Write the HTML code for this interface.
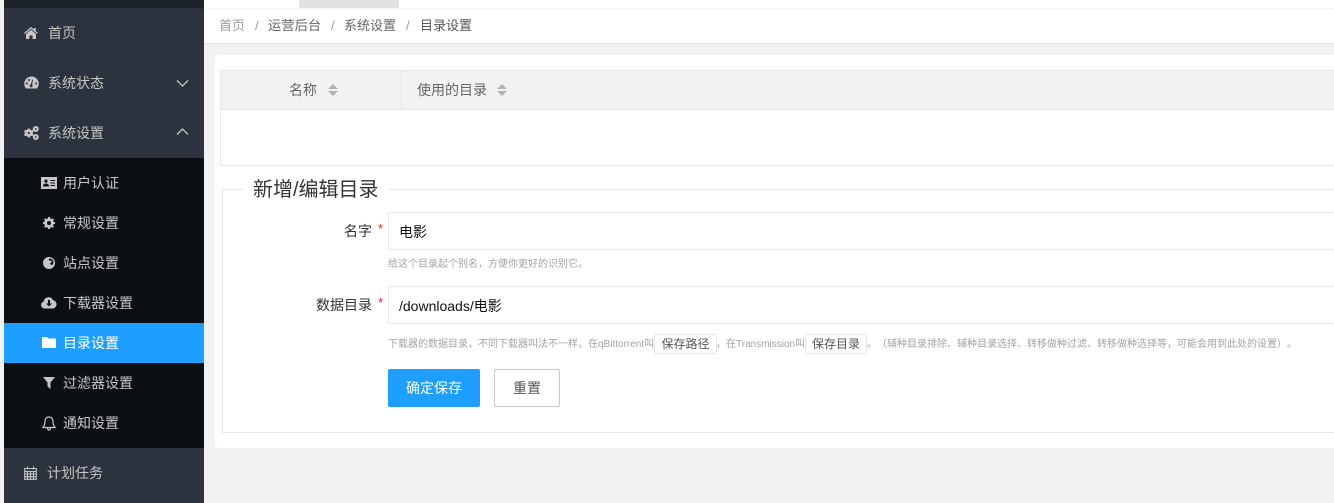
<!DOCTYPE html>
<html lang="zh"><head><meta charset="utf-8"><title>目录设置</title>
<style>
*{box-sizing:border-box}
html,body{margin:0;padding:0}
body{width:1334px;height:503px;overflow:hidden;background:#f2f2f2;position:relative;font-family:"Liberation Sans","Noto Sans CJK SC",sans-serif;font-size:14px;color:#333}
.a{position:absolute;white-space:nowrap}
#side{position:absolute;left:4px;top:0;width:200px;height:503px;background:#2b333e}
.ti{position:absolute;white-space:nowrap;color:#c6c6c6;font-size:14px;line-height:20px}
svg.i{position:absolute;fill:#c6c6c6}
svg.l{position:absolute;fill:none;stroke:#c6c6c6;stroke-width:1.3}
.g{color:#9a9a9a}
.tip{position:absolute;white-space:nowrap;font-size:10px;line-height:14px;color:#a3a3a3;text-spacing-trim:space-all;font-feature-settings:"palt" 0}
.code{position:absolute;height:20px;border:1px solid #e6e6e6;border-radius:2px;background:#fff;color:#555;font-size:12px;line-height:18px;text-align:center;white-space:nowrap}
.lab{position:absolute;right:962px;white-space:nowrap;font-size:14px;line-height:20px;color:#333}
.star{position:absolute;left:378px;color:#ff2020;font-size:13px;line-height:20px}
.inp{position:absolute;left:388px;width:960px;height:38px;border:1px solid #e6e6e6;border-radius:2px;background:#fff;color:#111;font-size:14px;line-height:38px;padding-left:10px;white-space:nowrap}
</style></head><body>

<div id="side">
<div style="position:absolute;left:0;top:0;width:200px;height:8px;background:#1c232b"></div>
<div style="position:absolute;left:0;top:158px;width:200px;height:290px;background:#0c0f14"></div>
<div style="position:absolute;left:0;top:323px;width:200px;height:40px;background:#1e9fff"></div>
</div>

<svg class="i" style="left:24px;top:27px" width="14" height="12" viewBox="0 0 14 12"><path d="M7 0 9.800 2.400V1h2v3.100L14 6l-.8.900L7 1.700.8 6.900 0 6z"/><path d="M7 2.800 12 7v5H8.500V8.500h-3V12H2V7z"/></svg>
<div class="ti" style="left:48px;top:23px">首页</div>

<svg class="i" style="left:24px;top:76px" width="15" height="13" viewBox="0 0 15 13"><path fill-rule="evenodd" d="M7.500 0.500A7.200 7.200 0 0 0 .3 7.700c0 1.800.6 3.500 1.700 4.800h11c1.100-1.300 1.700-3 1.700-4.800A7.200 7.200 0 0 0 7.500.500zM3 6.500a1 1 0 1 1 0 2 1 1 0 0 1 0-2zM5 3a1 1 0 1 1 0 2 1 1 0 0 1 0-2zM12 6.500a1 1 0 1 1 0 2 1 1 0 0 1 0-2zM8.300 3.500l.7.200-.9 5a1.500 1.500 0 1 1-1.300-.3z"/></svg>
<div class="ti" style="left:48px;top:73px">系统状态</div>
<svg class="l" style="left:176px;top:79px" width="13" height="8" viewBox="0 0 13 8"><path d="M1 1.500l5.500 5.500 5.500-5.500"/></svg>

<svg class="i" style="left:24px;top:126px" width="15" height="14" viewBox="0 0 15 14"><path fill-rule="evenodd" d="M3.800 2.500h2l.3 1.300 1.100.5 1.200-.6 1.300 1.500-.8 1.100v1.400l.8 1.100-1.300 1.500-1.200-.6-1.100.5-.3 1.300h-2l-.3-1.300-1.100-.5-1.200.6L0 8.800l.8-1.100V6.300L0 5.200l1.200-1.500 1.200.6 1.100-.5zM4.800 5.900a1.100 1.100 0 1 0 0 2.200 1.100 1.100 0 0 0 0-2.200z"/><path fill-rule="evenodd" d="M11.800 0a3 3 0 1 1 0 6 3 3 0 0 1 0-6zm0 2.100a.9.900 0 1 0 0 1.800.9.900 0 0 0 0-1.800zM11.800 8a3 3 0 1 1 0 6 3 3 0 0 1 0-6zm0 2.100a.9.900 0 1 0 0 1.800.9.900 0 0 0 0-1.800z"/></svg>
<div class="ti" style="left:48px;top:123px">系统设置</div>
<svg class="l" style="left:176px;top:128px" width="13" height="8" viewBox="0 0 13 8"><path d="M1 6.500l5.500-5.500 5.500 5.500"/></svg>

<svg class="i" style="left:41px;top:177px" width="16" height="12" viewBox="0 0 16 12"><path fill-rule="evenodd" d="M0 0h16v12H0zM5 2.500a1.600 1.600 0 1 0 0 3.200 1.600 1.600 0 0 0 0-3.200zM2 9.500h6c0-2-1-3-3-3s-3 1-3 3zM9.500 3v1H14V3zm0 2.500v1H14v-1zm0 2.500v1H14V8z"/></svg>
<div class="ti" style="left:63px;top:173px">用户认证</div>

<svg class="i" style="left:43px;top:217px" width="12" height="12" viewBox="0 0 12 12"><path fill-rule="evenodd" d="M5 0h2l.3 1.600 1.100.5L9.800 1.200l1.100 1.100-.9 1.400.5 1.100 1.500.2v2l-1.500.3-.5 1.100.9 1.300-1.200 1.200-1.300-.9-1.100.5L7 12H5l-.3-1.500-1.100-.5-1.300.9-1.200-1.200.9-1.300-.5-1.100L0 7V5l1.500-.2.5-1.100-.9-1.400 1.100-1.100 1.400.9 1.100-.5zM6 4a2 2 0 1 0 0 4 2 2 0 0 0 0-4z"/></svg>
<div class="ti" style="left:63px;top:213px">常规设置</div>

<svg class="i" style="left:43px;top:257px" width="12" height="12" viewBox="0 0 12 12"><path fill-rule="evenodd" d="M6 0a6 6 0 1 1 0 12A6 6 0 0 1 6 0zM5.500 2.500 7 4l1.500-.5.300 1.500L7 6.500l1.300 1.800 1.700-1L10.500 5 9.500 2.500 7 1.500z"/></svg>
<div class="ti" style="left:63px;top:253px">站点设置</div>

<svg class="i" style="left:41px;top:296px" width="16" height="13" viewBox="0 0 16 13"><path fill-rule="evenodd" d="M3.500 12.500A3.500 3.500 0 0 1 2.700 5.600 4.800 4.800 0 0 1 11.800 4 4.300 4.300 0 0 1 12 12.500zM7 4v3.500H5l3 3 3-3H9V4z"/></svg>
<div class="ti" style="left:63px;top:293px">下载器设置</div>

<svg class="i" style="left:42px;top:337px;fill:#fff" width="14" height="11" viewBox="0 0 14 11"><path d="M1 0h4l1.500 1.500H13a1 1 0 0 1 1 1V10a1 1 0 0 1-1 1H1a1 1 0 0 1-1-1V1a1 1 0 0 1 1-1z"/></svg>
<div class="ti" style="left:63px;top:333px;color:#fff">目录设置</div>

<svg class="i" style="left:43px;top:377px" width="12" height="12" viewBox="0 0 12 12"><path d="M0 0h12L7.500 5.500V12L4.500 9.500V5.500z"/></svg>
<div class="ti" style="left:63px;top:373px">过滤器设置</div>

<svg class="l" style="left:42px;top:416px;stroke-width:1.200" width="14" height="15" viewBox="0 0 14 15"><path d="M7 1C4.500 1 3 3 3 5.500 3 9 2 10 1 11.500h12C12 10 11 9 11 5.500 11 3 9.500 1 7 1zM5.500 12c0 1.200.7 2 1.500 2s1.500-.8 1.500-2"/></svg>
<div class="ti" style="left:63px;top:413px">通知设置</div>

<svg class="l" style="left:24px;top:466px;stroke-width:1.100" width="13" height="14" viewBox="0 0 13 14"><path d="M.7 2.500h11.600v10.800H.7zM.7 5.500h11.600M.7 8h11.600M.7 10.700h11.600M3.500 5.500v7.800M6.500 5.500v7.800M9.500 5.500v7.800M3.500.500v3M9.500.500v3"/></svg>
<div class="ti" style="left:47px;top:463px">计划任务</div>

<div style="position:absolute;left:204px;top:0;width:1130px;height:44px;background:#fff;border-bottom:1px solid #e4e4e4"></div>
<div style="position:absolute;left:204px;top:8px;width:1130px;height:1px;background:#f4f4f4"></div>
<div style="position:absolute;left:299px;top:0;width:100px;height:8px;background:#e2e2e2"></div>

<div class="a g" style="left:219px;top:16px;line-height:20px;font-size:13px">首页</div>
<div class="a g" style="left:255px;top:16px;line-height:20px;font-size:13px">/</div>
<div class="a" style="left:268px;top:16px;line-height:20px;font-size:13.300px;color:#666">运营后台</div>
<div class="a g" style="left:331px;top:16px;line-height:20px;font-size:13px">/</div>
<div class="a" style="left:344px;top:16px;line-height:20px;font-size:13px;color:#666">系统设置</div>
<div class="a g" style="left:406px;top:16px;line-height:20px;font-size:13px">/</div>
<div class="a" style="left:420px;top:16px;line-height:20px;font-size:13px;color:#555">目录设置</div>

<div style="position:absolute;left:215px;top:55px;width:1130px;height:393px;background:#fff;border-radius:4px"></div>

<div style="position:absolute;left:220px;top:70px;width:1130px;height:96px;border:1px solid #e6e6e6;background:#fff"></div>
<div style="position:absolute;left:221px;top:71px;width:1113px;height:38px;background:#f2f2f2"></div>
<div style="position:absolute;left:221px;top:109px;width:1113px;height:1px;background:#e6e6e6"></div>
<div style="position:absolute;left:401px;top:71px;width:1px;height:38px;background:#e6e6e6"></div>
<div class="a" style="left:289px;top:80px;line-height:20px;font-size:14px;color:#666">名称</div>
<svg class="i" style="left:328px;top:84px;fill:#b2b2b2" width="10" height="12" viewBox="0 0 10 12"><path d="M5 0l5 5H0zM0 7h10l-5 5z"/></svg>
<div class="a" style="left:417px;top:80px;line-height:20px;font-size:14px;color:#666">使用的目录</div>
<svg class="i" style="left:497px;top:84px;fill:#b2b2b2" width="10" height="12" viewBox="0 0 10 12"><path d="M5 0l5 5H0zM0 7h10l-5 5z"/></svg>

<div style="position:absolute;left:222px;top:189px;width:1130px;height:244px;border:1px solid #e6e6e6"></div>
<div class="a" style="left:243px;top:176px;padding:0 10px;background:#fff;font-size:20px;line-height:28px;color:#333">新增/编辑目录</div>

<div class="lab" style="top:221px">名字</div><div class="star" style="top:219px">*</div>
<div class="inp" style="top:212px">电影</div>
<div class="tip" style="left:388px;top:258px">给这个目录起个别名，方便你更好的识别它。</div>

<div class="lab" style="top:295px">数据目录</div><div class="star" style="top:293px">*</div>
<div class="inp" style="top:286px">/downloads/电影</div>

<div class="tip" style="left:388px;top:338px">下载器的数据目录，不同下载器叫法不一样，在qBittorrent叫</div>
<div class="code" style="left:654px;top:334px;width:63px">保存路径</div>
<div class="tip" style="left:716px;top:338px">，在Transmission叫</div>
<div class="code" style="left:805px;top:334px;width:62px">保存目录</div>
<div class="tip" style="left:867px;top:338px">。</div>
<div class="tip" style="left:877px;top:338px">（辅种目录排除、辅种目录选择、转移做种过滤、转移做种选择等，可能会用到此处的设置）。</div>

<div class="a" style="left:388px;top:369px;width:92px;height:38px;background:#1e9fff;border-radius:2px;color:#fff;font-size:14px;line-height:39px;text-align:center">确定保存</div>
<div class="a" style="left:494px;top:369px;width:66px;height:38px;background:#fff;border:1px solid #c9c9c9;border-radius:2px;color:#555;font-size:14px;line-height:36px;text-align:center">重置</div>

</body></html>
